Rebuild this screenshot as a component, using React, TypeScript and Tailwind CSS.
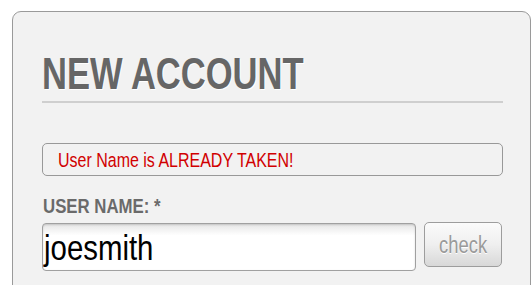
import React from "react";

export default function App() {
  return (
    <div className="w-[532px] h-[285px] overflow-hidden bg-white font-['Liberation_Sans',Arial,sans-serif]">
      <div className="ml-[12px] mt-[11px] w-[519px] h-[300px] rounded-[9px] border-[1.5px] border-[#9a9a9a] bg-[#f2f2f2] pt-[40px] pl-[29px] pr-[27px]">
        <div className="border-b-2 border-[#cfcfcf] pb-[5px]">
          <span className="inline-block origin-left scale-x-[0.785] whitespace-nowrap text-[44px] leading-[44px] font-bold text-[#666666] [text-shadow:1px_1px_0_#ffffff]">
            NEW ACCOUNT
          </span>
        </div>
        <div className="mt-[40px] flex h-[33px] items-center rounded-[5px] border-[1.5px] border-[#999999] bg-[#f2f2f2] pl-[15px]">
          <span className="inline-block origin-left scale-x-[0.78] whitespace-nowrap text-[20.5px] leading-[22px] text-[#d10000]">
            User Name is ALREADY TAKEN!
          </span>
        </div>
        <div className="mt-[20px] mb-[6px] h-[20px] pl-[1px]">
          <span className="inline-block origin-left scale-x-[0.84] whitespace-nowrap text-[20px] leading-[20px] font-bold text-[#6a6a6a]">
            USER NAME: *
          </span>
        </div>
        <div className="flex items-start gap-[8px]">
          <div className="mt-[1px] flex h-[48px] w-[374px] items-center rounded-[4px] border-[1.5px] border-[#a0a0a0] bg-gradient-to-b from-[#e6e6e6] via-white via-[25%] to-white pl-[1px] shadow-[inset_0_1px_2px_rgba(0,0,0,0.15)]">
            <span className="inline-block origin-left scale-x-[0.84] whitespace-nowrap text-[35px] leading-[36px] text-black mt-[2px]">
              joesmith
            </span>
          </div>
          <div className="flex h-[45px] w-[78px] items-center justify-center rounded-[5px] border-[1.5px] border-[#9d9d9d] bg-gradient-to-b from-[#fbfbfb] via-[#efefef] via-[50%] to-[#d8d8d8]">
            <span className="inline-block scale-x-[0.8] whitespace-nowrap text-[23px] leading-[24px] text-[#9a9a9a] [text-shadow:0_1px_0_#ffffff]">
              check
            </span>
          </div>
        </div>
      </div>
    </div>
  );
}
